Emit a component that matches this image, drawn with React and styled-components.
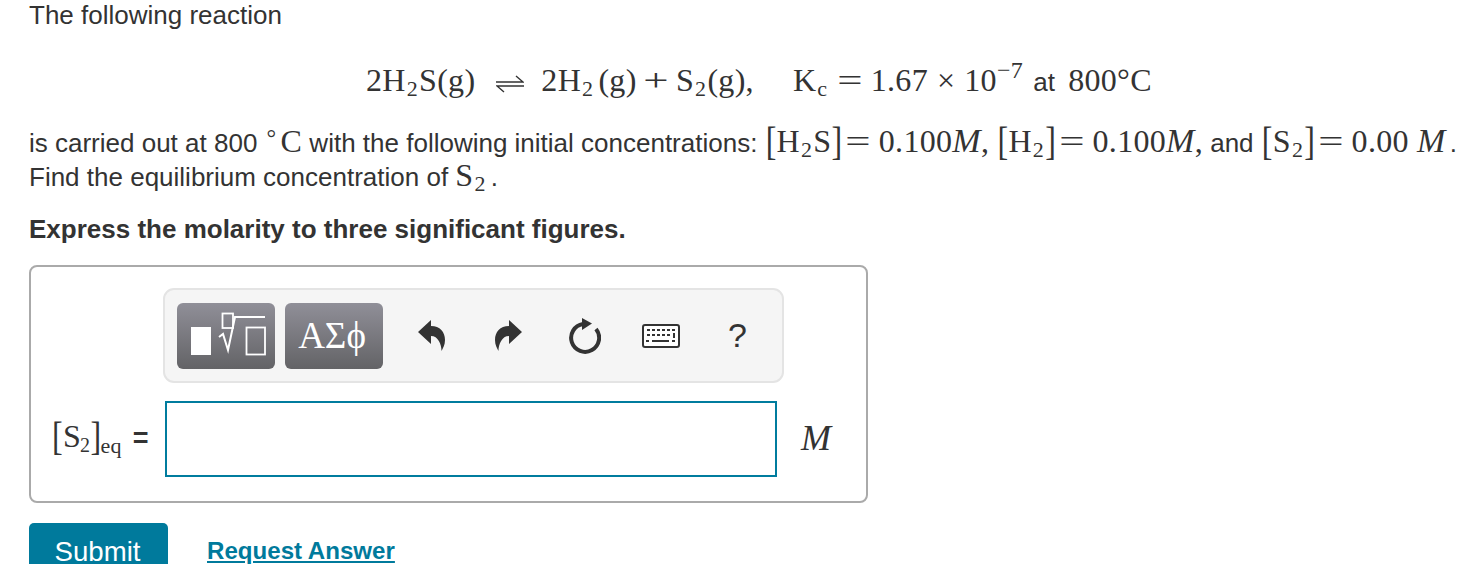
import styled, { createGlobalStyle } from "styled-components";

const GlobalStyle = createGlobalStyle`
  html, body {
    margin: 0;
    height: 564px;
    overflow: hidden;
    background: #fff;
  }
`;

function UndoIcon({ flip }) {
  return (
    <svg width="27" height="31" viewBox="0 0 27 31" style={flip ? { transform: "scaleX(-1)" } : undefined}>
      <path d="M0 12 L13 0 L13 6 C22 6 27 12 27 20 C27 25 25 28 23.5 31 C23.5 24 20 16 13 16 L13 24 Z" fill="#333" />
    </svg>
  );
}

function RefreshIcon() {
  return (
    <svg width="32" height="36" viewBox="0 0 32 36">
      <path d="M27 11 A14 14 0 1 1 14 6" fill="none" stroke="#333" strokeWidth="4" />
      <path d="M13 0 L23 5.5 L13 12 Z" fill="#333" />
    </svg>
  );
}

function KeyboardIcon() {
  const topKeys = [5, 10, 15, 20, 25, 30];
  const midKeys = [5, 10, 15, 20, 25];
  return (
    <svg width="38" height="24" viewBox="0 0 38 24">
      <rect x="1" y="1" width="36" height="22" rx="2" fill="#fff" stroke="#333" strokeWidth="2" />
      {topKeys.map((x) => (
        <rect key={x} x={x} y="5" width="3" height="2" fill="#333" />
      ))}
      {midKeys.map((x) => (
        <rect key={x} x={x} y="10" width="3" height="2" fill="#333" />
      ))}
      <rect x="31" y="9" width="2" height="5" fill="#333" />
      <rect x="4" y="16" width="3" height="2" fill="#333" />
      <rect x="10" y="16" width="17" height="2" fill="#333" />
      <rect x="30" y="16" width="3" height="2" fill="#333" />
    </svg>
  );
}

function TemplatesIcon() {
  return (
    <svg width="98" height="66" viewBox="0 0 98 66">
      <rect x="14" y="24" width="20" height="28" fill="#fff" />
      <rect x="45.5" y="10.5" width="10.5" height="14.5" fill="none" stroke="#fff" strokeWidth="1.8" />
      <path d="M42 34 L46 31 L51 47 L58 14 L88 14" fill="none" stroke="#fff" strokeWidth="2" />
      <rect x="69.5" y="24.5" width="18.5" height="27" fill="none" stroke="#fff" strokeWidth="1.8" />
    </svg>
  );
}

function ArrowsIcon() {
  return (
    <ArrowsSvg width="28" height="18" viewBox="0 0 28 18">
      <path d="M0 7 H27 L20 1" fill="none" stroke="#333" strokeWidth="1.4" />
      <path d="M28 11 H1 L8 17" fill="none" stroke="#333" strokeWidth="1.4" />
    </ArrowsSvg>
  );
}

export default function App() {
  return (
    <Page>
      <GlobalStyle />
      <Intro>The following reaction</Intro>
      <Equation>
        <Math>
          2H<Sub>2</Sub>S(g)
          <ArrowsIcon />
          2H<Sub>2</Sub>
          <Gap>(g)</Gap>
          <Op>+</Op>S<Sub>2</Sub>(g),
          <Kc>
            K<Sub>c</Sub>
          </Kc>
          <Op>=</Op>1.67<Cross>×</Cross>10<Sup>−7</Sup>
        </Math>
        <Plain> at </Plain>
        <Temperature>800°C</Temperature>
      </Equation>
      <Paragraph>
        is carried out at 800 <Math><Degree>°</Degree>C</Math> with the following initial concentrations:{" "}
        <Math>
          <OpenBracket>[</OpenBracket>H<Sub>2</Sub>S<CloseBracket>]</CloseBracket>
          <Op>=</Op>0.100<Italic>M</Italic>,
        </Math>{" "}
        <Math>
          <OpenBracket>[</OpenBracket>H<Sub>2</Sub>
          <CloseBracket>]</CloseBracket>
          <Op>=</Op>0.100<Italic>M</Italic>,
        </Math>{" "}
        and{" "}
        <Math>
          <OpenBracket>[</OpenBracket>S<Sub>2</Sub>
          <CloseBracket>]</CloseBracket>
          <Op>=</Op>0.00 <Italic>M</Italic>
        </Math>
        <Period>.</Period>
        <br />
        Find the equilibrium concentration of{" "}
        <Math>
          S<Sub>2</Sub>
        </Math>
        <Period>.</Period>
      </Paragraph>
      <Instruction>Express the molarity to three significant figures.</Instruction>
      <AnswerBox>
        <Toolbar>
          <ToolButton>
            <TemplatesIcon />
          </ToolButton>
          <ToolButton>
            <Symbols>ΑΣϕ</Symbols>
          </ToolButton>
          <ToolIcon $left={25}>
            <UndoIcon />
          </ToolIcon>
          <ToolIcon $left={50}>
            <UndoIcon flip />
          </ToolIcon>
          <ToolIcon $left={47}>
            <RefreshIcon />
          </ToolIcon>
          <ToolIcon $left={41}>
            <KeyboardIcon />
          </ToolIcon>
          <ToolIcon $left={48}>
            <Help>?</Help>
          </ToolIcon>
        </Toolbar>
        <AnswerRow>
          <Label>
            <Math>
              <OpenBracket>[</OpenBracket>S<LabelSub>2</LabelSub>
              <CloseBracket>]</CloseBracket>
              <EqSub>eq</EqSub>
            </Math>
            <LabelEquals>=</LabelEquals>
          </Label>
          <AnswerInput />
          <Unit>M</Unit>
        </AnswerRow>
      </AnswerBox>
      <Actions>
        <SubmitButton>Submit</SubmitButton>
        <RequestLink href="#">Request Answer</RequestLink>
      </Actions>
    </Page>
  );
}

const Page = styled.div`
  width: 1482px;
  padding-left: 29px;
  box-sizing: border-box;
  font-family: "Liberation Sans", Arial, sans-serif;
  font-size: 26px;
  color: #333;
`;

const Intro = styled.p`
  margin: 0;
  line-height: 30px;
`;

const Equation = styled.div`
  margin-top: 34px;
  padding-left: 337px;
  height: 36px;
  line-height: 36px;
  white-space: nowrap;
`;

const Math = styled.span`
  font-family: "Liberation Serif", "Times New Roman", serif;
  font-size: 32px;
  line-height: 0;
  letter-spacing: 0.3px;
`;

const Temperature = styled(Math)`
  margin-left: 6px;
`;

const Sub = styled.span`
  font-size: 22px;
  vertical-align: -5px;
  line-height: 0;
  margin: 0 1px;
`;

const LabelSub = styled(Sub)`
  margin: 0 0 0 -1px;
  font-size: 20px;
`;

const Sup = styled.span`
  font-size: 24px;
  vertical-align: 13px;
  line-height: 0;
`;

const Gap = styled.span`
  margin-left: 4px;
`;

const Op = styled.span`
  display: inline-block;
  margin: 0 11px 0 10px;
  line-height: 0;
  transform: scaleX(1.4);
`;

const Cross = styled.span`
  margin: 0 9px;
`;

const Degree = styled.span`
  display: inline-block;
  margin: 0 4px 0 2px;
  font-size: 24px;
  line-height: 0;
  vertical-align: 6px;
`;

const Bracket = styled.span`
  display: inline-block;
  line-height: 0;
  transform: scaleY(1.25);
`;

const OpenBracket = styled(Bracket)`
  margin-left: 1px;
`;

const CloseBracket = styled(Bracket)`
  width: 8px;
`;

const ArrowsSvg = styled.svg`
  margin: 0 17px 0 21px;
  vertical-align: -2px;
`;

const Kc = styled.span`
  margin: 0 3px 0 39px;
`;

const Italic = styled.i`
  font-size: 34px;
  font-style: italic;
`;

const Plain = styled.span`
  margin-left: 3px;
  white-space: pre;
`;

const Period = styled.span`
  margin-left: 4px;
`;

const Paragraph = styled.p`
  margin: 26px 0 0;
  line-height: 34px;
  white-space: nowrap;
`;

const Instruction = styled.p`
  margin: 20px 0 0;
  font-weight: 700;
  line-height: 30px;
`;

const AnswerBox = styled.div`
  box-sizing: border-box;
  width: 839px;
  height: 238px;
  margin-top: 21px;
  padding: 21px 0 0 20px;
  border: 2px solid #aaa;
  border-radius: 8px;
`;

const Toolbar = styled.div`
  box-sizing: border-box;
  display: flex;
  align-items: center;
  width: 621px;
  height: 95px;
  margin-left: 112px;
  padding: 0 12px;
  background: #f5f5f5;
  border: 2px solid #e4e4e4;
  border-radius: 11px;
`;

const ToolButton = styled.div`
  display: flex;
  align-items: center;
  justify-content: center;
  width: 98px;
  height: 66px;
  margin-right: 10px;
  border-radius: 6px;
  background: linear-gradient(#908f98, #636366);

  &:last-of-type {
    margin-right: 0;
  }
`;

const ToolIcon = styled.div`
  display: flex;
  align-items: center;
  margin-left: ${({ $left }) => $left}px;
`;

const Symbols = styled.span`
  padding-right: 4px;
  font-family: "Liberation Serif", serif;
  font-size: 37px;
  color: #fff;
`;

const Help = styled.span`
  font-size: 34px;
  color: #333;
`;

const AnswerRow = styled.div`
  display: flex;
  align-items: center;
  margin-top: 18px;
`;

const Label = styled.div`
  display: flex;
  align-items: center;
  width: 114px;
  padding-top: 4px;
  box-sizing: border-box;
  white-space: nowrap;
`;

const EqSub = styled.span`
  margin-left: 2px;
  font-size: 22px;
  vertical-align: -6px;
  line-height: 0;
`;

const LabelEquals = styled.span`
  margin: 0 0 6px 11px;
  font-size: 27px;
  font-weight: 700;
`;

const AnswerInput = styled.input`
  box-sizing: border-box;
  width: 612px;
  height: 76px;
  border: 2px solid #007c9e;
  outline: none;
`;

const Unit = styled.span`
  margin-left: 24px;
  padding-bottom: 2px;
  font-family: "Liberation Serif", serif;
  font-style: italic;
  font-size: 36px;
`;

const Actions = styled.div`
  display: flex;
  align-items: flex-start;
  gap: 39px;
  margin-top: 20px;
`;

const SubmitButton = styled.button`
  width: 139px;
  height: 56px;
  padding: 2px 2px 0 0;
  border: none;
  border-radius: 5px;
  background: #007a9c;
  color: #fff;
  font-family: "Liberation Sans", Arial, sans-serif;
  font-size: 27.6px;
`;

const RequestLink = styled.a`
  margin-top: 13px;
  color: #007a9c;
  font-weight: 700;
  font-size: 24.1px;
  line-height: 30px;
`;
